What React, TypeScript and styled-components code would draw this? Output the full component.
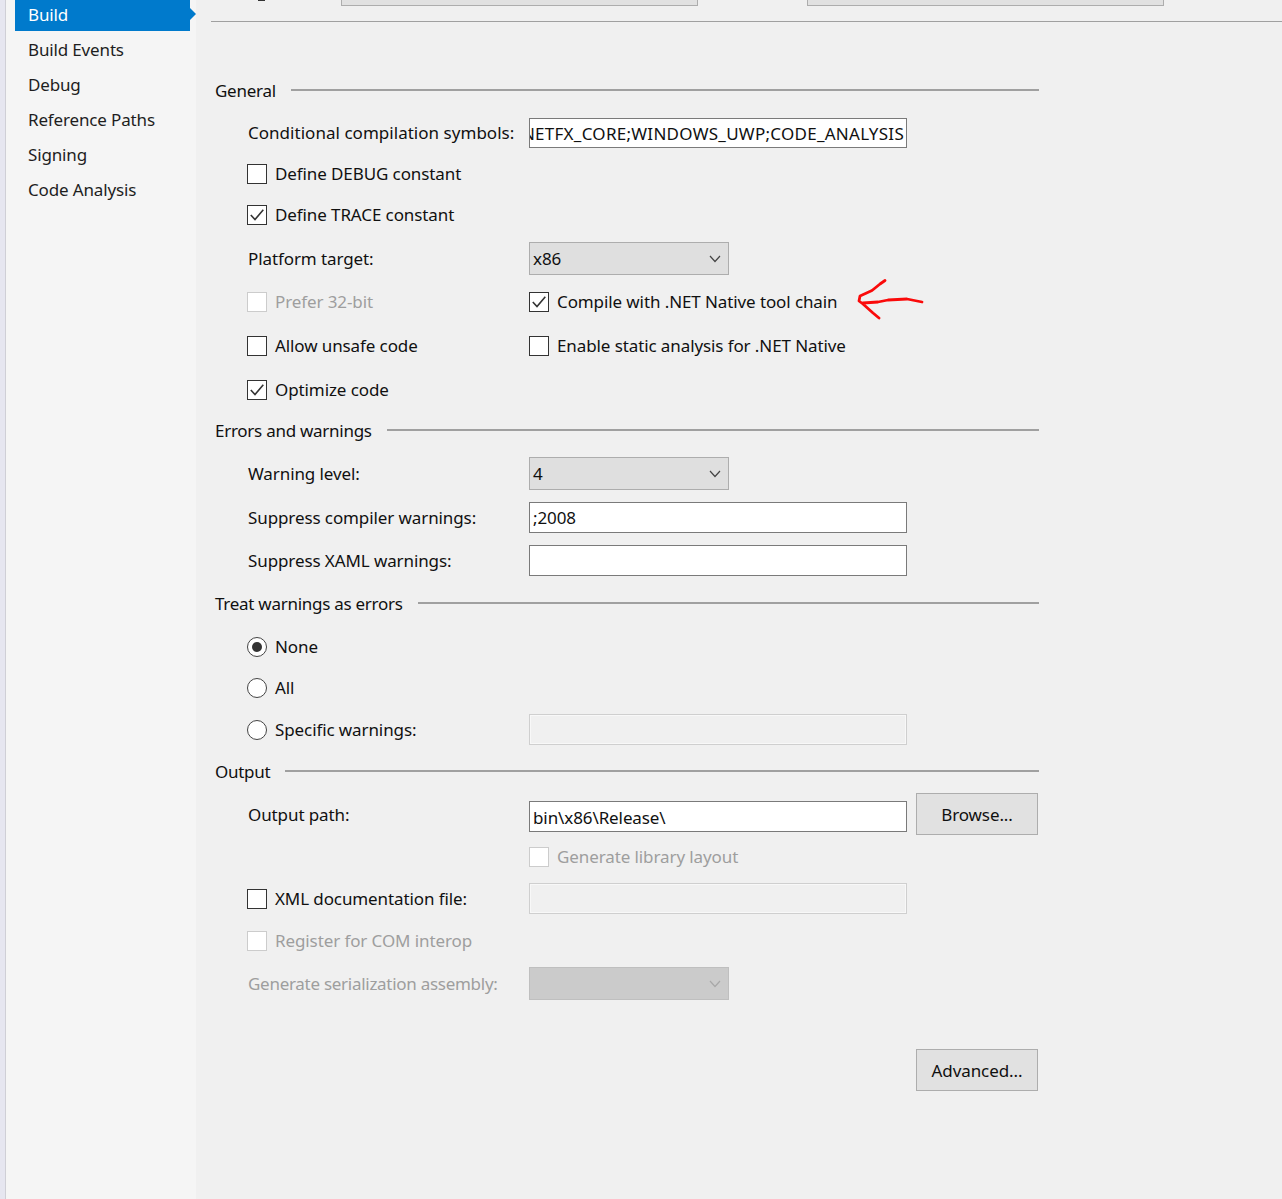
import React from "react";
import styled, { createGlobalStyle } from "styled-components";

const GlobalStyle = createGlobalStyle`
  html, body {
    margin: 0;
    padding: 0;
    background: #f0f0f0;
  }
  * {
    box-sizing: border-box;
  }
`;

const sideItems = ["Build Events", "Debug", "Reference Paths", "Signing", "Code Analysis"];

function Check({ disabled }: { disabled?: boolean }) {
  return (
    <svg width="14" height="12" viewBox="0 0 14 12" fill="none">
      <path
        d="M0.8 6L5 10.5L13.3 0.8"
        stroke={disabled ? "#a0a0a0" : "#333333"}
        strokeWidth="1.6"
      />
    </svg>
  );
}

function Chevron({ disabled }: { disabled?: boolean }) {
  return (
    <svg width="12" height="8" viewBox="0 0 12 8" fill="none">
      <path d="M1 1L6 6.5L11 1" stroke={disabled ? "#a8a8a8" : "#444444"} strokeWidth="1.2" />
    </svg>
  );
}

function CheckField({
  label,
  checked,
  disabled,
}: {
  label: string;
  checked?: boolean;
  disabled?: boolean;
}) {
  return (
    <CheckWrap>
      <CheckBox $disabled={disabled}>{checked && <Check disabled={disabled} />}</CheckBox>
      <Label $disabled={disabled}>{label}</Label>
    </CheckWrap>
  );
}

function RadioField({ label, checked }: { label: string; checked?: boolean }) {
  return (
    <CheckWrap>
      <Radio>{checked && <RadioDot />}</Radio>
      <Label>{label}</Label>
    </CheckWrap>
  );
}

function Heading({ title, top }: { title: string; top: number }) {
  return (
    <HeadingRow $top={top}>
      <HeadingText>{title}</HeadingText>
      <HeadingLine />
    </HeadingRow>
  );
}

export default function App() {
  return (
    <Page>
      <GlobalStyle />
      <LeftStrip />
      <Sidebar>
        <SideItem $active>Build</SideItem>
        {sideItems.map((item) => (
          <SideItem key={item}>{item}</SideItem>
        ))}
      </Sidebar>

      <Main>
        <TabBar>
          <TabCut />
          <Tab $left={76} />
          <Tab $left={109} />
        </TabBar>

        <Form>
          <Heading title="General" top={54} />
          <Row $h={30} $top={12}>
            <RowLabel $spacing={0.03} $lift>Conditional compilation symbols:</RowLabel>
            <TextBox $right>NETFX_CORE;WINDOWS_UWP;CODE_ANALYSIS</TextBox>
          </Row>
          <Row $h={20} $top={16}>
            <CheckField label="Define DEBUG constant" />
          </Row>
          <Row $h={20} $top={21}>
            <CheckField label="Define TRACE constant" checked />
          </Row>
          <Row $h={33} $top={17}>
            <RowLabel>Platform target:</RowLabel>
            <Select>
              x86
              <Chevron />
            </Select>
          </Row>
          <Row $h={20} $top={17}>
            <CheckField label="Prefer 32-bit" disabled />
            <CheckField label="Compile with .NET Native tool chain" checked />
            <RedArrow width="70" height="44" viewBox="0 0 70 44" fill="none">
              <path
                d="M31 1.5L26 5L18 11.500L6 17L5 22L9 25L19 34L25 39M9 24L24 23L34 21L53 20L68 23"
                stroke="#fa0a0a"
                strokeWidth="2.8"
                strokeLinecap="round"
                strokeLinejoin="round"
              />
            </RedArrow>
          </Row>
          <Row $h={20} $top={24}>
            <CheckField label="Allow unsafe code" />
            <CheckField label="Enable static analysis for .NET Native" />
          </Row>
          <Row $h={20} $top={24}>
            <CheckField label="Optimize code" checked />
          </Row>

          <Heading title="Errors and warnings" top={16} />
          <Row $h={33} $top={11}>
            <RowLabel>Warning level:</RowLabel>
            <Select>
              4
              <Chevron />
            </Select>
          </Row>
          <Row $h={31} $top={12}>
            <RowLabel>Suppress compiler warnings:</RowLabel>
            <TextBox>;2008</TextBox>
          </Row>
          <Row $h={31} $top={12}>
            <RowLabel>Suppress XAML warnings:</RowLabel>
            <TextBox />
          </Row>

          <Heading title="Treat warnings as errors" top={13} />
          <Row $h={20} $top={18}>
            <RadioField label="None" checked />
          </Row>
          <Row $h={20} $top={21}>
            <RadioField label="All" />
          </Row>
          <Row $h={31} $top={16}>
            <RadioField label="Specific warnings:" />
            <TextBox $disabled />
          </Row>

          <Heading title="Output" top={12} />
          <Row $h={42} $top={6}>
            <RowLabel>Output path:</RowLabel>
            <TextBox $low>bin\x86\Release\</TextBox>
            <PushButton>Browse...</PushButton>
          </Row>
          <Row $h={20} $top={12}>
            <span />
            <CheckField label="Generate library layout" disabled />
          </Row>
          <Row $h={31} $top={16}>
            <CheckField label="XML documentation file:" />
            <TextBox $disabled />
          </Row>
          <Row $h={20} $top={17}>
            <CheckField label="Register for COM interop" disabled />
          </Row>
          <Row $h={33} $top={16}>
            <RowLabel $disabled $spacing={-0.28}>Generate serialization assembly:</RowLabel>
            <Select $disabled>
              <span />
              <Chevron disabled />
            </Select>
          </Row>
          <Row $h={42} $top={49}>
            <span />
            <span />
            <PushButton>Advanced...</PushButton>
          </Row>
        </Form>
      </Main>
    </Page>
  );
}

const font = `"Noto Sans", "Open Sans", sans-serif`;

const Page = styled.div`
  display: flex;
  width: 1282px;
  height: 1199px;
  overflow: hidden;
  background: #f0f0f0;
  font-family: ${font};
  font-size: 17px;
  letter-spacing: -0.1px;
  color: #101010;
`;

const LeftStrip = styled.div`
  width: 6px;
  flex: none;
  background: #e6e6f0;
  border-right: 1px solid #cfcfd6;
`;

const Sidebar = styled.nav`
  width: 190px;
  flex: none;
  padding-left: 9px;
  background: #f5f5f5;
  letter-spacing: -0.15px;
`;

const SideItem = styled.div<{ $active?: boolean }>`
  position: relative;
  display: flex;
  align-items: center;
  width: 175px;
  height: ${(p) => (p.$active ? "31px" : "35px")};
  margin-bottom: ${(p) => (p.$active ? "1px" : "0")};
  padding: 0 0 ${(p) => (p.$active ? "2px" : "0")} 13px;
  background: ${(p) => (p.$active ? "#007acc" : "transparent")};
  color: ${(p) => (p.$active ? "#ffffff" : "#1e1e1e")};

  ${(p) =>
    p.$active &&
    `
    &::after {
      content: "";
      position: absolute;
      left: 175px;
      top: 8px;
      border-left: 6px solid #007acc;
      border-top: 6px solid transparent;
      border-bottom: 6px solid transparent;
    }
  `}
`;

const Main = styled.main`
  flex: 1;
  min-width: 0;
`;

const TabBar = styled.div`
  display: flex;
  align-items: flex-start;
  height: 22px;
  margin-left: 15px;
  border-bottom: 1px solid #a0a0a0;
`;

const TabCut = styled.div`
  width: 7px;
  height: 1px;
  margin-left: 47px;
  background: #333333;
`;

const Tab = styled.div<{ $left: number }>`
  width: 357px;
  height: 6px;
  margin-left: ${(p) => p.$left}px;
  background: #e1e1e1;
  border: 1px solid #adadad;
  border-top: none;
`;

const Form = styled.div`
  display: flex;
  flex-direction: column;
  width: 824px;
  margin-left: 19px;
`;

const HeadingRow = styled.div<{ $top: number }>`
  display: flex;
  align-items: center;
  gap: 15px;
  height: 30px;
  margin-top: ${(p) => p.$top}px;
`;

const HeadingText = styled.div`
  line-height: 30px;
  letter-spacing: -0.27px;
`;

const HeadingLine = styled.div`
  flex: 1;
  height: 2px;
  margin-top: -2px;
  background: #a0a0a0;
`;

const Row = styled.div<{ $h: number; $top: number }>`
  position: relative;
  display: grid;
  grid-template-columns: 282px 378px 122px;
  grid-template-rows: ${(p) => p.$h}px;
  align-items: center;
  height: ${(p) => p.$h}px;
  margin-top: ${(p) => p.$top}px;
  margin-left: 32px;
`;

const RowLabel = styled.div<{ $disabled?: boolean; $spacing?: number; $lift?: boolean }>`
  padding-left: 1px;
  margin-top: ${(p) => (p.$lift ? "-1px" : "0")};
  letter-spacing: ${(p) => p.$spacing ?? -0.1}px;
  color: ${(p) => (p.$disabled ? "#9e9e9e" : "#101010")};
  white-space: nowrap;
`;

const CheckWrap = styled.div`
  display: flex;
  align-items: center;
  gap: 8px;
  height: 20px;
  white-space: nowrap;
`;

const CheckBox = styled.div<{ $disabled?: boolean }>`
  display: flex;
  align-items: center;
  justify-content: center;
  width: 20px;
  height: 20px;
  flex: none;
  background: #ffffff;
  border: ${(p) => (p.$disabled ? "1px solid #cccccc" : "1.5px solid #333333")};
`;

const Radio = styled.div`
  display: flex;
  align-items: center;
  justify-content: center;
  width: 20px;
  height: 20px;
  flex: none;
  background: #ffffff;
  border: 1.5px solid #444444;
  border-radius: 50%;
`;

const RadioDot = styled.div`
  width: 10px;
  height: 10px;
  background: #333333;
  border-radius: 50%;
`;

const Label = styled.span<{ $disabled?: boolean }>`
  line-height: 20px;
  color: ${(p) => (p.$disabled ? "#9e9e9e" : "#101010")};
`;

const TextBox = styled.div<{ $disabled?: boolean; $right?: boolean; $low?: boolean }>`
  display: flex;
  align-items: center;
  justify-content: ${(p) => (p.$right ? "flex-end" : "flex-start")};
  width: 378px;
  height: ${(p) => (p.$right ? "30px" : "31px")};
  margin-top: ${(p) => (p.$low ? "5px" : "0")};
  padding: ${(p) => (p.$low ? "2px 2px 0 3px" : "0 2px 0 3px")};
  overflow: hidden;
  white-space: nowrap;
  letter-spacing: ${(p) => (p.$right ? "0.27px" : "-0.1px")};
  background: ${(p) => (p.$disabled ? "#f0f0f0" : "#ffffff")};
  border: 1px solid ${(p) => (p.$disabled ? "#cfcfcf" : "#7a7a7a")};
  box-shadow: ${(p) => (p.$disabled ? "inset 0 0 0 1px #f8f8f8" : "none")};
`;

const Select = styled.div<{ $disabled?: boolean }>`
  display: flex;
  align-items: center;
  justify-content: space-between;
  width: 200px;
  height: 33px;
  padding: 0 7px 0 3px;
  background: ${(p) => (p.$disabled ? "#cbcbcb" : "#dfdfdf")};
  border: 1px solid ${(p) => (p.$disabled ? "#bfbfbf" : "#adadad")};
`;

const PushButton = styled.div`
  display: flex;
  align-items: center;
  justify-content: center;
  width: 122px;
  height: 42px;
  margin-left: 9px;
  background: #e1e1e1;
  border: 1px solid #adadad;
`;

const RedArrow = styled.svg`
  position: absolute;
  left: 607px;
  top: -13px;
`;
